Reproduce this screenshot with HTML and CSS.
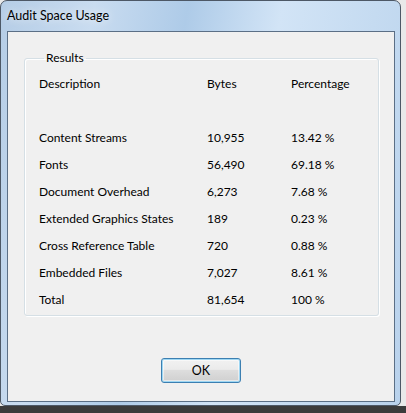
FILE: index.html
```html
<!DOCTYPE html>
<html lang="en">
<head>
    <meta charset="UTF-8">
    <title>Audit Space Usage</title>
    <link rel="stylesheet" href="styles.css">
</head>
<body>
    <div class="window">
        <div class="titlebar">Audit Space Usage</div>
        <div class="client">
            <fieldset class="group">
                <legend>Results</legend>
                <div class="grid">
                    <div class="row head">
                        <span>Description</span><span>Bytes</span><span>Percentage</span>
                    </div>
                    <div class="row blank"></div>
                    <div class="row">
                        <span>Content Streams</span><span>10,955</span><span>13.42 %</span>
                    </div>
                    <div class="row">
                        <span>Fonts</span><span>56,490</span><span>69.18 %</span>
                    </div>
                    <div class="row">
                        <span>Document Overhead</span><span>6,273</span><span>7.68 %</span>
                    </div>
                    <div class="row">
                        <span>Extended Graphics States</span><span>189</span><span>0.23 %</span>
                    </div>
                    <div class="row">
                        <span>Cross Reference Table</span><span>720</span><span>0.88 %</span>
                    </div>
                    <div class="row">
                        <span>Embedded Files</span><span>7,027</span><span>8.61 %</span>
                    </div>
                    <div class="row">
                        <span>Total</span><span>81,654</span><span>100 %</span>
                    </div>
                </div>
            </fieldset>
            <div class="buttons">
                <button class="btn" type="button">OK</button>
            </div>
        </div>
    </div>
</body>
</html>
```

FILE: styles.css
```css
* {
    margin: 0;
    padding: 0;
    box-sizing: border-box;
}

body {
    font-family: 'Lato', 'Noto Sans', sans-serif;
    font-size: 12px;
    color: #000;
    width: 406px;
    height: 413px;
    overflow: hidden;
    background: linear-gradient(to bottom, #e9e9e9 0, #e9e9e9 406px, #3b3b3b 406px);
}

.window {
    width: 401px;
    height: 406px;
    display: flex;
    flex-direction: column;
    border: 1px solid #4d5866;
    border-radius: 7px 7px 5px 5px;
    background: linear-gradient(100deg, #b5cde6 0%, #c9dcf0 20%, #aecbe8 40%, #d2e4f6 60%, #c5dbf1 80%, #b9d2ec 100%);
}

.titlebar {
    height: 30px;
    padding-left: 6px;
    line-height: 30px;
    font-size: 12.5px;
    color: #000;
    text-shadow: 0 0 8px rgba(255, 255, 255, 0.9);
}

.client {
    flex: 1;
    margin: 0 5px 3px 6px;
    border: 1px solid #5b6f86;
    background: #f0f0f0;
    display: flex;
    flex-direction: column;
}

.group {
    margin: 18px 15px 0 16px;
    border: 1px solid #d5dfe5;
    border-radius: 3px;
    box-shadow: inset 1px 1px 0 #fff, 1px 1px 0 #fff;
    padding: 4px 0 2px 14px;
}

.group legend {
    margin-left: 5px;
    padding: 0 2px;
    line-height: 16px;
}

.row {
    display: grid;
    grid-template-columns: 168px 84px 1fr;
    height: 27px;
    align-items: center;
}

.buttons {
    display: flex;
    justify-content: center;
    margin-top: 42px;
}

.btn {
    width: 80px;
    height: 25px;
    font-family: inherit;
    font-size: 12.5px;
    color: #000;
    border: 1px solid #3c7fb1;
    border-radius: 3px;
    background: linear-gradient(to bottom, #f2f2f2 0%, #ebebeb 45%, #dddddd 50%, #cfcfcf 100%);
    box-shadow: inset 0 0 0 1px #9fd7f3, inset 0 0 0 2px rgba(255, 255, 255, 0.5);
}
```
